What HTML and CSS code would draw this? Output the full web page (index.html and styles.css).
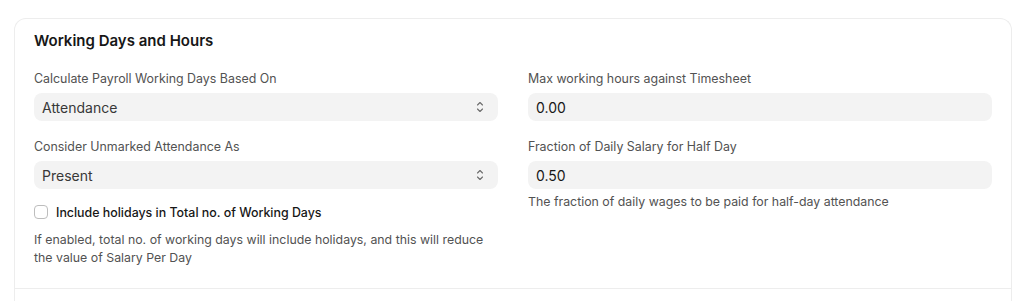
FILE: index.html
```html
<!DOCTYPE html>
<html lang="en">
<head>
  <meta charset="UTF-8" />
  <meta name="viewport" content="width=device-width, initial-scale=1.0"/>
  <title>Payroll Settings</title>
  <link rel="stylesheet" href="styles.css">
</head>
<body>
  <div class="card">
    <div class="section">
      <h2 class="section-head">Working Days and Hours</h2>
      <div class="columns">
        <div class="column">
          <div class="control">
            <label class="label">Calculate Payroll Working Days Based On</label>
            <div class="select">
              <span>Attendance</span>
              <svg class="arrows" width="8" height="12" viewBox="0 0 8 12"><path d="M1.5 4 L4 1.5 L6.5 4 M1.5 8 L4 10.5 L6.5 8" fill="none" stroke="#6b6b6b" stroke-width="1.1" stroke-linecap="round" stroke-linejoin="round"/></svg>
            </div>
          </div>
          <div class="control">
            <label class="label">Consider Unmarked Attendance As</label>
            <div class="select">
              <span>Present</span>
              <svg class="arrows" width="8" height="12" viewBox="0 0 8 12"><path d="M1.5 4 L4 1.5 L6.5 4 M1.5 8 L4 10.5 L6.5 8" fill="none" stroke="#6b6b6b" stroke-width="1.1" stroke-linecap="round" stroke-linejoin="round"/></svg>
            </div>
          </div>
          <div class="control check">
            <label class="check-row">
              <span class="box"></span>
              <span class="check-label">Include holidays in Total no. of Working Days</span>
            </label>
            <p class="help">If enabled, total no. of working days will include holidays, and this will reduce the value of Salary Per Day</p>
          </div>
        </div>
        <div class="column">
          <div class="control">
            <label class="label">Max working hours against Timesheet</label>
            <div class="input">0.00</div>
          </div>
          <div class="control">
            <label class="label">Fraction of Daily Salary for Half Day</label>
            <div class="input">0.50</div>
            <p class="help short">The fraction of daily wages to be paid for half-day attendance</p>
          </div>
        </div>
      </div>
    </div>
    <div class="section next"></div>
  </div>
</body>
</html>
```

FILE: styles.css
```css
body {
  margin: 0;
  background: #fff;
  font-family: Inter, "Noto Sans", sans-serif;
  color: #171717;
}

.card {
  box-sizing: border-box;
  margin: 18px 11px 0 14px;
  border: 1px solid #ededed;
  border-bottom: none;
  border-radius: 12px 12px 0 0;
  height: 283px;
  overflow: hidden;
}

.section {
  padding: 12px 19px 21px 19px;
  border-bottom: 1px solid #ededed;
}

.section.next {
  border-bottom: none;
}

.section-head {
  margin: 0 0 20px;
  font-size: 15px;
  font-weight: 600;
  line-height: 20px;
  color: #171717;
}

.columns {
  display: grid;
  grid-template-columns: 1fr 1fr;
  gap: 30px;
}

.control {
  margin-bottom: 18px;
}

.control.check {
  margin-top: -4px;
}

.control:last-child {
  margin-bottom: 0;
}

.label {
  display: block;
  font-size: 12.4px;
  line-height: 16px;
  color: #525252;
  margin-bottom: 6px;
}

.select, .input {
  display: flex;
  align-items: center;
  justify-content: space-between;
  height: 28px;
  padding: 0 14px 0 8px;
  background: #f3f3f3;
  border-radius: 8px;
  font-size: 14px;
  color: #383838;
}

.input {
  color: #171717;
}

.arrows {
  display: block;
}

.check-row {
  display: flex;
  align-items: center;
  gap: 8px;
  height: 18px;
}

.box {
  width: 12px;
  height: 12px;
  border: 1px solid #bdbdbd;
  border-radius: 4px;
  background: #fff;
}

.check-label {
  font-size: 12.4px;
  font-weight: 500;
  color: #171717;
}

.help {
  margin: 10px 0 0;
  font-size: 12.35px;
  line-height: 18px;
  color: #525252;
}

.help.short {
  margin-top: 4px;
}
```
